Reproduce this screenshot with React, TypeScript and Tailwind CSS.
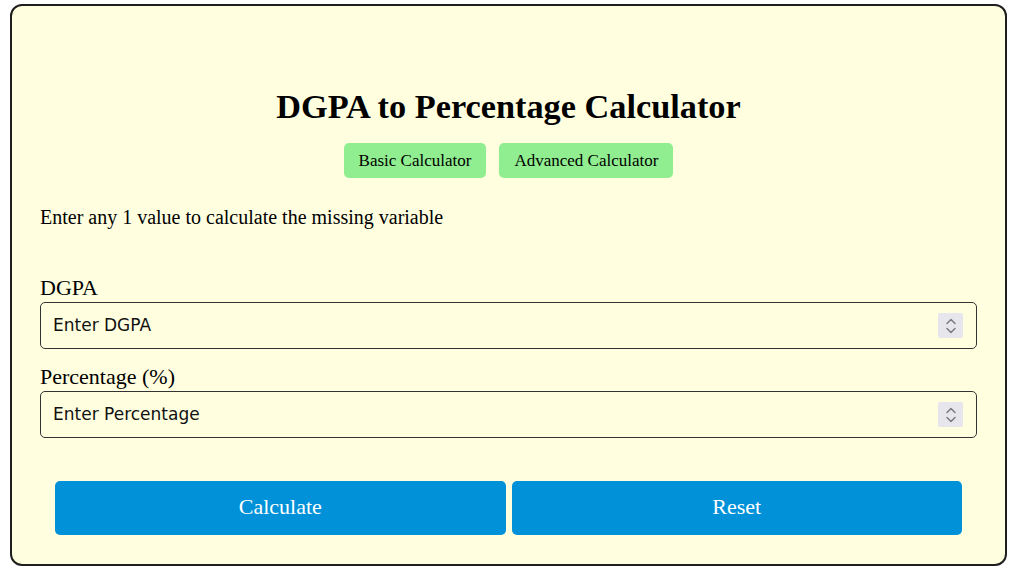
import { useState } from 'react';

function Spinner() {
  return (
    <div className="flex h-[25px] w-[25px] shrink-0 items-center justify-center rounded-[2px] bg-[#e6e6ec]">
      <svg width="14" height="20" viewBox="0 0 14 20" fill="none" stroke="#7a7a82" strokeWidth="1.5" strokeLinecap="round" strokeLinejoin="round">
        <path d="M3 7.5 7 3.5 11 7.5" />
        <path d="M3 12.5 7 16.5 11 12.5" />
      </svg>
    </div>
  );
}

function NumberField({ label, placeholder, value, onChange, className }: {
  label: string;
  placeholder: string;
  value: string;
  onChange: (v: string) => void;
  className?: string;
}) {
  return (
    <div className={className}>
      <label className="block text-[22px] leading-[26px] text-black">{label}</label>
      <div className="mt-px flex h-[47px] items-center rounded-[5px] border border-[#333] pl-[12px] pr-[13px]">
        <input
          type="text"
          inputMode="decimal"
          value={value}
          onChange={(e) => onChange(e.target.value)}
          placeholder={placeholder}
          className="min-w-0 flex-1 bg-transparent text-[17px] text-black outline-none placeholder:text-[#111] [font-family:'DejaVu_Sans',sans-serif]"
        />
        <Spinner />
      </div>
    </div>
  );
}

export default function App() {
  const [dgpa, setDgpa] = useState('');
  const [pct, setPct] = useState('');

  const calculate = () => {
    if (dgpa && !pct) setPct(((parseFloat(dgpa) - 0.75) * 10).toFixed(2));
    else if (pct && !dgpa) setDgpa((parseFloat(pct) / 10 + 0.75).toFixed(2));
  };
  const reset = () => { setDgpa(''); setPct(''); };

  return (
    <div className="min-h-[576px] bg-white pt-[4px] pl-[10px] [font-family:'Liberation_Serif',serif]">
      <div className="flex h-[562px] w-[997px] flex-col rounded-[12px] border-2 border-[#1e1e1e] bg-[#ffffe0] px-[28px] pt-[80px]">
        <h1 className="text-center text-[34.3px] font-bold leading-[40px] text-black">DGPA to Percentage Calculator</h1>

        <div className="mt-[17px] flex justify-center gap-[13px]">
          <button className="h-[35px] rounded-[5px] bg-[#90ee90] px-[15px] text-[17px] text-black">Basic Calculator</button>
          <button className="h-[35px] rounded-[5px] bg-[#90ee90] px-[15px] text-[17px] text-black">Advanced Calculator</button>
        </div>

        <p className="mt-[27px] text-[20px] leading-[24px] text-black">Enter any 1 value to calculate the missing variable</p>

        <NumberField className="mt-[46px]" label="DGPA" placeholder="Enter DGPA" value={dgpa} onChange={setDgpa} />
        <NumberField className="mt-[15px]" label="Percentage (%)" placeholder="Enter Percentage" value={pct} onChange={setPct} />

        <div className="mt-[43px] flex gap-[6px] px-[15px]">
          <button onClick={calculate} className="h-[54px] flex-1 rounded-[5px] bg-[#0091d9] pb-[3px] text-[22px] text-white">Calculate</button>
          <button onClick={reset} className="h-[54px] flex-1 rounded-[5px] bg-[#0091d9] pb-[3px] text-[22px] text-white">Reset</button>
        </div>
      </div>
    </div>
  );
}
